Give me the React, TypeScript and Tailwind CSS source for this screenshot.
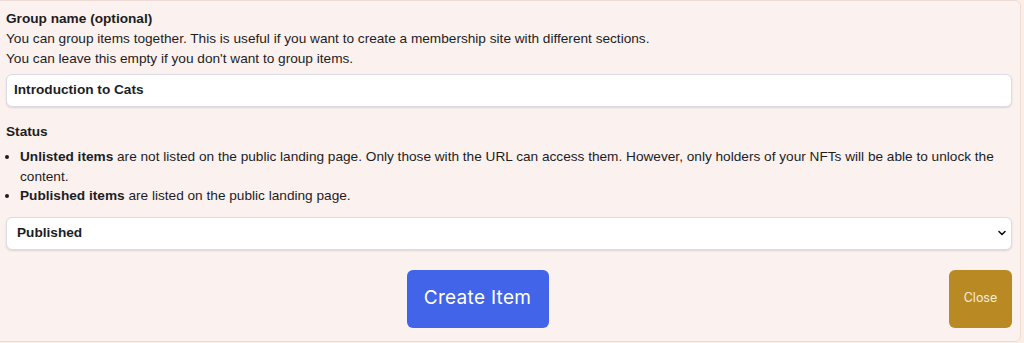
import React from "react";

export default function App() {
  return (
    <div className="w-[1024px] h-[343px] bg-[#fbeee6] overflow-hidden" style={{ fontFamily: '"Liberation Sans", Arial, sans-serif' }}>
      <div className="ml-[-10px] w-[1031px] h-[342px] bg-[#fbf1ef] border border-[#eddcd6] rounded-md pl-[15px] pr-[8px] pt-[8px] text-[13.65px] text-[#1d1d1f]">
        <div className="font-bold leading-[20px]">Group name (optional)</div>
        <div className="leading-[19.5px]">You can group items together. This is useful if you want to create a membership site with different sections.</div>
        <div className="leading-[19.5px]">You can leave this empty if you don't want to group items.</div>
        <div className="mt-[6px] h-[33px] bg-white rounded-md border border-[#dcdce6] shadow-[0_1px_2px_rgba(0,0,0,0.12)] flex items-center px-[7px] font-bold">Introduction to Cats</div>
        <div className="mt-[15px] font-bold leading-[20px]">Status</div>
        <ul className="list-disc pl-[13px] ml-[1px] leading-[19.5px] mt-[5px]">
          <li><b>Unlisted items</b> are not listed on the public landing page. Only those with the URL can access them. However, only holders of your NFTs will be able to unlock the content.</li>
          <li><b>Published items</b> are listed on the public landing page.</li>
        </ul>
        <div className="mt-[11px] h-[33px] bg-white rounded-md border border-[#dcdce6] shadow-[0_1px_2px_rgba(0,0,0,0.12)] flex items-center justify-between pl-[10px] pr-[4px] font-bold">
          <span>Published</span>
          <svg width="10" height="10" viewBox="0 0 10 10"><path d="M2 3.5 L5 6.5 L8 3.5" stroke="#111" strokeWidth="1.6" fill="none" strokeLinecap="round" strokeLinejoin="round" /></svg>
        </div>
        <div className="mt-[20px] flex items-start">
          <div className="flex-1 flex justify-center">
            <button className="w-[142px] h-[58px] rounded-md bg-[#4164e9] text-white text-[19px] tracking-[0.3px]" style={{ fontFamily: 'Inter, "Liberation Sans", sans-serif' }}>Create Item</button>
          </div>
          <button className="w-[63px] h-[58px] rounded-md bg-[#b98a23] text-[#f6ecd8] text-[12.5px]" style={{ fontFamily: 'Inter, "Liberation Sans", sans-serif' }}>Close</button>
        </div>
      </div>
    </div>
  );
}
